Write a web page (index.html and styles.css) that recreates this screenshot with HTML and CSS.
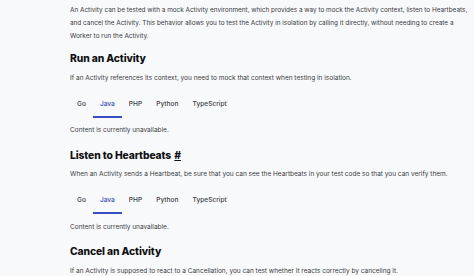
FILE: index.html
```html
<!DOCTYPE html>
<html lang="en">
<head>
<meta charset="utf-8">
<title>Testing Activities</title>
<link rel="stylesheet" href="styles.css">
</head>
<body>
<main class="doc">
  <p class="intro">An Activity can be tested with a mock Activity environment, which provides a way to mock the Activity context, listen to Heartbeats,<br>and cancel the Activity. This behavior allows you to test the Activity in isolation by calling it directly, without needing to create a<br>Worker to run the Activity.</p>

  <h2 class="heading heading-first">Run an Activity</h2>
  <p class="text">If an Activity references its context, you need to mock that context when testing in isolation.</p>
  <div class="tabs">
    <span class="tab">Go</span>
    <span class="tab active">Java</span>
    <span class="tab">PHP</span>
    <span class="tab">Python</span>
    <span class="tab">TypeScript</span>
  </div>
  <p class="text content">Content is currently unavailable.</p>

  <h2 class="heading">Listen to Heartbeats <a class="anchor" href="#">#</a></h2>
  <p class="text">When an Activity sends a Heartbeat, be sure that you can see the Heartbeats in your test code so that you can verify them.</p>
  <div class="tabs">
    <span class="tab">Go</span>
    <span class="tab active">Java</span>
    <span class="tab">PHP</span>
    <span class="tab">Python</span>
    <span class="tab">TypeScript</span>
  </div>
  <p class="text content">Content is currently unavailable.</p>

  <h2 class="heading">Cancel an Activity</h2>
  <p class="text">If an Activity is supposed to react to a Cancellation, you can test whether it reacts correctly by canceling it.</p>
</main>
</body>
</html>
```

FILE: styles.css
```css
html, body {
  margin: 0;
  padding: 0;
  background: #f8f9fa;
}

body {
  font-family: Inter, "Noto Sans", sans-serif;
  color: #3a3a3f;
  overflow: hidden;
}

.doc {
  padding: 4px 0 0 70px;
  width: 403px;
}

.intro,
.text {
  margin: 0;
  font-size: 6.5px;
  line-height: 13px;
}

.intro {
  width: 420px;
  font-size: 6.4px;
  white-space: nowrap;
}

.heading {
  margin: 9.5px 0 0;
  font-family: Inter, "Noto Sans", sans-serif;
  font-weight: 800;
  font-size: 10.3px;
  line-height: 16px;
  color: #111114;
  letter-spacing: -0.1px;
}

.heading-first {
  margin-top: 7px;
}

.heading + .text {
  margin-top: 5.5px;
}

.anchor {
  color: #111114;
  text-decoration: underline;
  text-underline-offset: 1px;
  margin-left: 1px;
}

.tabs {
  display: flex;
  margin-top: 7px;
}

.tab {
  padding: 6px 7px 5px;
  font-size: 6.6px;
  line-height: 13px;
  font-weight: 500;
  color: #3f3f46;
  border-bottom: 2px solid transparent;
}

.tab.active {
  color: #3b4cc0;
  border-bottom-color: #3b4cc0;
}

.content {
  margin-top: 6.5px;
}
```
